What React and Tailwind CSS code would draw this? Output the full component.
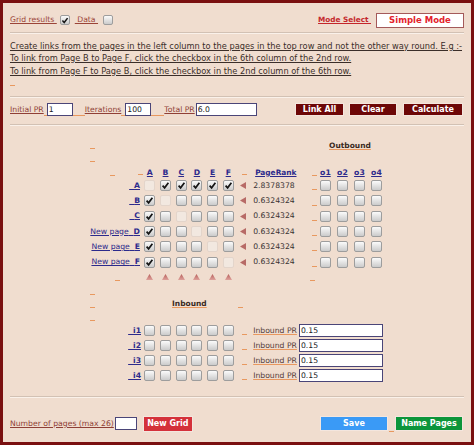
import React from "react";

const cols = ["A", "B", "C", "D", "E", "F"];
const outs = ["o1", "o2", "o3", "o4"];
const pages = [
  { label: "A", prefix: "", rank: "2.8378378" },
  { label: "B", prefix: "", rank: "0.6324324" },
  { label: "C", prefix: "", rank: "0.6324324" },
  { label: "D", prefix: "New page", rank: "0.6324324" },
  { label: "E", prefix: "New page", rank: "0.6324324" },
  { label: "F", prefix: "New page", rank: "0.6324324" },
];
const inbound = ["i1", "i2", "i3", "i4"];

function Box({ checked, off, small }) {
  const size = small ? "w-[10px] h-[10px]" : "w-[11px] h-[11px]";
  if (off) {
    return <span className={`${size} inline-block rounded-[2px] border border-[#e3d5cb] bg-[#f2e8e0]`} />;
  }
  return (
    <span
      className={`${size} inline-flex items-center justify-center rounded-[2px] border border-[#9d9d9d] bg-linear-to-b from-[#fbfbfb] to-[#cbcbcb]`}
    >
      {checked && (
        <svg width="9" height="9" viewBox="0 0 9 9">
          <path d="M1.6 4.6 L3.6 6.8 L7.4 1.8" stroke="#151515" strokeWidth="1.7" fill="none" />
        </svg>
      )}
    </span>
  );
}

function Dash() {
  return <span className="inline-block w-[5px] h-px bg-[#e8985f]" />;
}

function Hr({ className }) {
  return <div className={`border-t border-b border-t-[#d2c1b4] border-b-[#faf1ea] ${className}`} />;
}

function Cell({ children }) {
  return <div className="w-[15.7px] shrink-0 flex justify-center items-center">{children}</div>;
}

function UpArrow() {
  return (
    <svg width="7" height="6" viewBox="0 0 7 6">
      <defs>
        <linearGradient id="ua" x1="0" y1="0" x2="0" y2="1">
          <stop offset="0" stopColor="#b65e5b" />
          <stop offset="1" stopColor="#dfa29c" />
        </linearGradient>
      </defs>
      <polygon points="3.5,0 7,6 0,6" fill="url(#ua)" />
    </svg>
  );
}

function LeftArrow() {
  return (
    <svg width="6" height="7" viewBox="0 0 6 7">
      <polygon points="0,3.5 6,0 6,7" fill="#b76a66" />
    </svg>
  );
}

function Field({ value, className }) {
  return (
    <input
      readOnly
      value={value}
      className={`h-[13px] bg-white border border-[#4a4578] px-[1px] text-[7.7px] leading-[11px] text-[#222] outline-none ${className}`}
    />
  );
}

function Btn({ children, className }) {
  return (
    <button className={`flex items-center justify-center font-bold text-[8px] text-white border border-[#f4e6de] ${className}`}>
      {children}
    </button>
  );
}

export default function App() {
  return (
    <div className="w-[474px] h-[445px] bg-[#7a1010] p-[3px] font-['DejaVu_Sans',sans-serif] text-[7.7px]">
      <div className="h-full bg-[#f0ddcf] px-[7px] flex flex-col">
        {/* top row */}
        <div className="mt-[9px] h-[16px] flex items-center">
          <a className="text-[#9b4438] underline">Grid results&nbsp;</a>
          <span className="ml-[3px] flex"><Box checked small /></span>
          <a className="ml-[5px] text-[#9b4438] underline">&nbsp;Data&nbsp;</a>
          <span className="ml-[5px] flex"><Box small /></span>
          <a className="ml-auto font-bold text-[7.3px] text-[#c4262b] underline">Mode Select&nbsp;</a>
          <div className="ml-[5px] w-[88px] h-[15px] bg-white border border-[#a45a5a] flex items-center justify-center text-[8.5px] font-bold text-[#e3222c]">
            Simple Mode
          </div>
        </div>

        <Hr className="mt-[4px]" />

        <div className="mt-[5.5px] leading-[12.5px] text-[8.25px] text-[#3b2e29] underline whitespace-nowrap">
          <div>Create links from the pages in the left column to the pages in the top row and not the other way round. E.g :-</div>
          <div>To link from Page B to Page F, click the checkbox in the 6th column of the 2nd row.</div>
          <div>To link from Page F to Page B, click the checkbox in the 2nd column of the 6th row.</div>
        </div>

        <div className="h-[9px] flex items-end"><Dash /></div>

        <Hr className="mt-[9.5px]" />

        {/* settings row */}
        <div className="mt-[5.5px] h-[13px] flex items-center">
          <span className="text-[#8f3f36] underline">Initial PR</span>
          <span className="w-[3px] self-end border-b border-[#e8985f]" />
          <Field value="1" className="w-[26px]" />
          <span className="w-[12px] self-end border-b border-[#e8985f]" />
          <span className="text-[#8f3f36] underline">Iterations</span>
          <span className="w-[4px] self-end border-b border-[#e8985f]" />
          <Field value="100" className="w-[26px]" />
          <span className="w-[13px] self-end border-b border-[#e8985f]" />
          <span className="text-[#8f3f36] underline">Total PR</span>
          <span className="w-[1px]" />
          <Field value="6.0" className="w-[61px]" />
          <div className="ml-auto mr-[1px] flex gap-[5px]">
            <Btn className="w-[49px] h-[13px] bg-[#6d0707]">Link All</Btn>
            <Btn className="w-[48px] h-[13px] bg-[#6d0707]">Clear</Btn>
            <Btn className="w-[60px] h-[13px] bg-[#6d0707] ml-[1px]">Calculate</Btn>
          </div>
        </div>

        <Hr className="mt-[8px]" />

        {/* outbound header */}
        <div className="mt-[13px] h-[14px] flex">
          <span className="ml-[80px] self-end mb-[4px] flex"><Dash /></span>
          <span className="ml-[234px] self-center font-bold text-[7.5px] text-[#3b2a22] underline decoration-[#e8985f]">Outbound</span>
        </div>
        <div className="h-[14px] flex">
          <span className="ml-[80px] self-end mb-[5px] flex"><Dash /></span>
        </div>

        {/* column header */}
        <div className="h-[11px] flex items-center">
          <div className="w-[132px] shrink-0 flex items-center">
            <span className="ml-[100px] mt-[5px] flex"><Dash /></span>
            <span className="ml-[23px] mt-[3px] flex"><Dash /></span>
          </div>
          {cols.map((c) => (
            <Cell key={c}>
              <a className="font-bold text-[#2c2a8c] underline">{c}</a>
            </Cell>
          ))}
          <div className="w-[75.8px] shrink-0 flex items-center">
            <span className="ml-[6px] mt-[4px] flex"><Dash /></span>
            <a className="ml-[8px] font-bold text-[7.4px] text-[#2c2a8c] underline">PageRank</a>
          </div>
          <span className="w-[5px] shrink-0 mt-[5px] flex"><Dash /></span>
          {outs.map((o) => (
            <div key={o} className="w-[17px] shrink-0 flex justify-center">
              <a className="font-bold text-[#2c2a8c] underline">{o}</a>
            </div>
          ))}
        </div>

        {/* page rows */}
        {pages.map((p, r) => (
          <div key={p.label} className="h-[15.3px] flex items-center">
            <div className="w-[132px] shrink-0 flex justify-end pr-[2px]">
              <a className="text-[#2c2a8c] underline whitespace-nowrap">
                {p.prefix}
                {"\u00a0\u00a0"}
                <b>{p.label}</b>
              </a>
            </div>
            {cols.map((c, ci) => (
              <Cell key={c}>
                <Box off={ci === r} checked={(r === 0 && ci > 0) || (r > 0 && ci === 0)} />
              </Cell>
            ))}
            <div className="w-[75.8px] shrink-0 flex items-center">
              <span className="ml-[4px] flex"><LeftArrow /></span>
              <span className="ml-[7px] text-[#3a3434]">{p.rank}</span>
            </div>
            <span className="w-[5px] shrink-0 self-end mb-[3px] flex"><Dash /></span>
            {outs.map((o) => (
              <div key={o} className="w-[17px] shrink-0 flex justify-center">
                <Box />
              </div>
            ))}
          </div>
        ))}

        {/* arrows row */}
        <div className="h-[14px] flex items-center">
          <div className="w-[132px] shrink-0 flex self-end mb-[3px]">
            <span className="ml-[105px] flex"><Dash /></span>
          </div>
          {cols.map((c) => (
            <Cell key={c}>
              <UpArrow />
            </Cell>
          ))}
          <div className="w-[74px] shrink-0" />
          <span className="w-[5px] shrink-0 self-end mb-[3px] flex"><Dash /></span>
        </div>

        {/* inbound header */}
        <div className="h-[13px] flex">
          <span className="ml-[80px] self-end mb-[2px] flex"><Dash /></span>
        </div>
        <div className="h-[13px] flex">
          <span className="ml-[80px] self-end mb-[2px] flex"><Dash /></span>
          <span className="ml-[77px] self-center font-bold text-[7.5px] text-[#3b2a22] underline decoration-[#e8985f]">Inbound</span>
          <span className="ml-[31px] self-end mb-[2px] flex"><Dash /></span>
        </div>
        <div className="h-[13px] flex">
          <span className="ml-[80px] self-end mb-[2px] flex"><Dash /></span>
        </div>

        {/* inbound rows */}
        {inbound.map((n) => (
          <div key={n} className="h-[15px] flex items-center">
            <div className="w-[132px] shrink-0 flex justify-end pr-[1px]">
              <a className="text-[#2c2a8c] underline whitespace-nowrap">
                {"\u00a0\u00a0"}
                <b>{n}</b>
              </a>
            </div>
            {cols.map((c) => (
              <Cell key={c}>
                <Box />
              </Cell>
            ))}
            <div className="flex items-center">
              <span className="ml-[6px] self-end mb-[2px] flex"><Dash /></span>
              <span className="ml-[6px] text-[#56403a] underline decoration-[#e8985f]">Inbound PR</span>
              <Field value="0.15" className="ml-[2px] w-[84px]" />
            </div>
          </div>
        ))}

        <Hr className="mt-[13px]" />

        {/* bottom row */}
        <div className="mt-[18px] h-[16px] flex items-center">
          <span className="text-[#8f3f36] underline">Number of pages (max 26)</span>
          <Field value="" className="ml-[1px] w-[22px]" />
          <Btn className="ml-[6px] w-[50px] h-[16px] bg-[#d4313a]">New Grid</Btn>
          <Btn className="ml-auto w-[68px] h-[15px] bg-[#3a9af6]">Save</Btn>
          <span className="ml-[1px] self-end flex"><Dash /></span>
          <Btn className="ml-[1px] mr-[1px] w-[68px] h-[15px] bg-[#0c953a]">Name Pages</Btn>
        </div>
      </div>
    </div>
  );
}
